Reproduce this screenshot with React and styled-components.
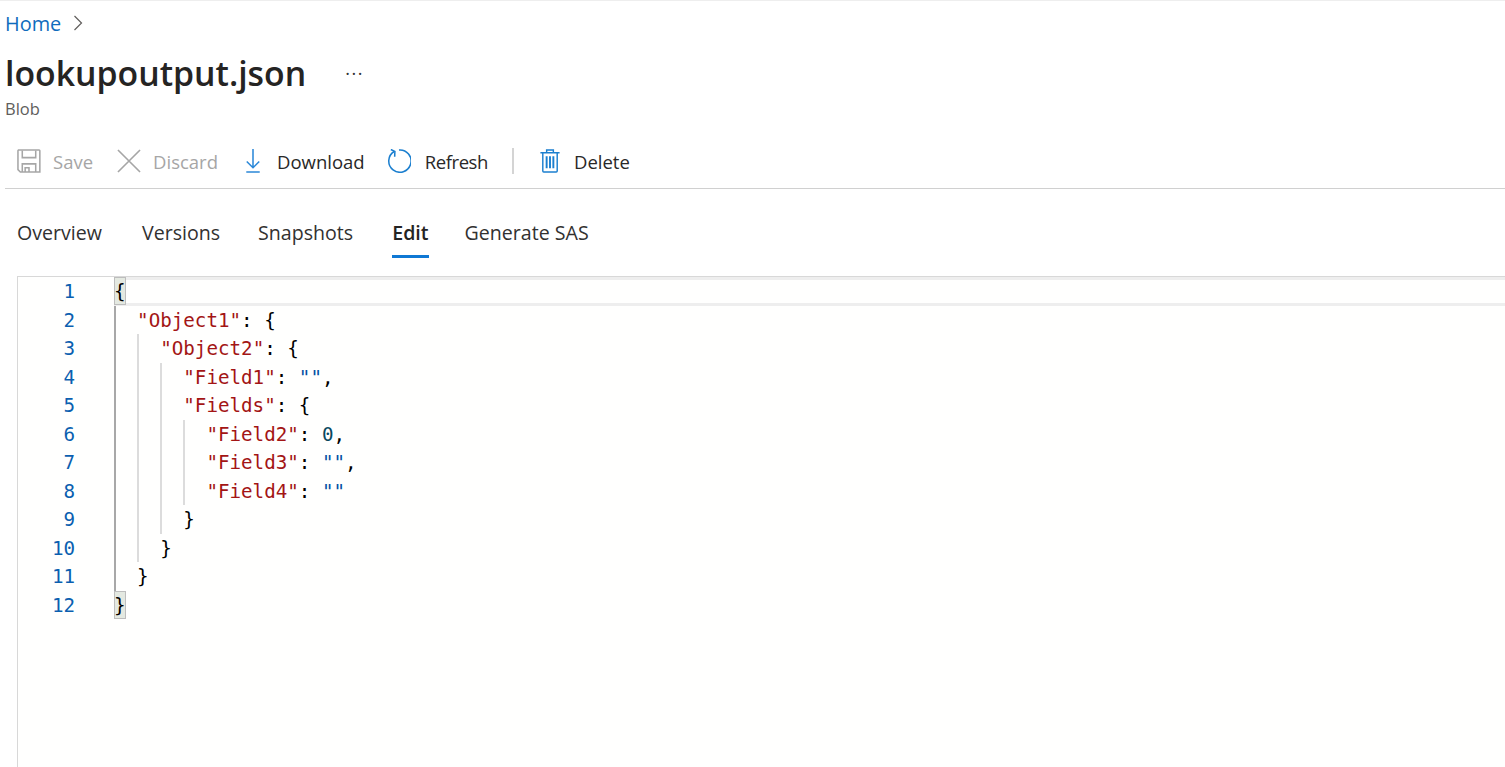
import React from "react";
import styled, { createGlobalStyle } from "styled-components";

const Global = createGlobalStyle`
  html, body { margin: 0; padding: 0; background: #fff; height: 100%; overflow: hidden; }
  #root { height: 100%; }
`;
const Page = styled.div`
  height: 767px; box-sizing: border-box; border-top: 1px solid #eee;
  padding-left: 5px; font-family: "Open Sans", "Noto Sans", sans-serif; color: #292827; overflow: hidden;
`;
const Crumbs = styled.nav`
  height: 45px; box-sizing: border-box; padding-bottom: 1px; display: flex; align-items: center; gap: 12px; font-size: 19.9px;
`;
const HomeLink = styled.a`color: #0f6cbd;`;
const TitleRow = styled.div`display: flex; align-items: center; height: 54px; gap: 39px;`;
const Title = styled.h1`margin: 0; font-size: 33.8px; font-weight: 600; line-height: 54px; color: #252423;`;
const More = styled.span`font-size: 18px; line-height: 1; letter-spacing: 1.6px; margin-top: -1px; color: #333;`;
const Kind = styled.div`font-size: 16.5px; color: #605e5c; height: 18px; line-height: 18px;`;
const Toolbar = styled.div`
  margin-top: 21px; height: 50px; box-sizing: border-box; border-bottom: 1px solid #d0d0d0;
  display: flex; align-items: flex-start; padding-left: 12px; font-size: 18.5px;
`;
const Action = styled.button`
  all: unset; display: flex; align-items: center; height: 26px; margin-top: 9px;
  gap: ${p => p.$gap}px; margin-right: ${p => p.$mr}px; color: ${p => (p.$off ? "#a6a6a6" : "#292827")};
  letter-spacing: ${p => p.$ls || 0}px;
`;
const Sep = styled.div`width: 2px; height: 26px; background: #d4d4d4; margin: 9px 26px 0 0;`;
const Tabs = styled.div`display: flex; padding-left: 12px; gap: 39px; height: 70px; font-size: 19.6px;`;
const Tab = styled.div`
  height: 66px; line-height: 87px; position: relative; margin-left: ${p => p.$ml || 0}px;
  font-weight: ${p => (p.$active ? 600 : 400)};
  color: ${p => (p.$active ? "#252423" : "#323130")};
  border-bottom: 3px solid ${p => (p.$active ? "#0f78d4" : "transparent")};
`;
const Editor = styled.div`
  margin-left: 12px; margin-top: 17px; height: 492px; display: flex; background: #fffffe;
  border-left: 1px solid #d8d8d8; border-top: 1px solid #d8d8d8;
  font-family: "DejaVu Sans Mono", monospace; font-size: 19.2px;
`;
const Gutter = styled.div`width: 96px; flex: none;`;
const LineNo = styled.div`
  height: 28.5px; line-height: 30.5px; text-align: right; padding-right: 39px; color: #0b5fb0;
`;
const Code = styled.div`flex: 1; min-width: 0;`;
const Row = styled.div`
  height: 28.5px; line-height: 30.5px; display: flex; white-space: pre; box-sizing: border-box;
  ${p => !p.$plain && "box-shadow: inset 2px 0 #a8a8a8;"}
  ${p => p.$current && "border-top: 3px solid #eeeeee; border-bottom: 3px solid #eeeeee; line-height: 22.5px;"}
`;
const Guide = styled.span`
  width: 23.1px; flex: none; box-sizing: border-box; height: 28.5px;
  border-left: ${p => (p.$on ? "2px solid #dcdcdc" : "0")};
`;
const Key = styled.span`color: #a31515;`;
const Punct = styled.span`color: #000;`;
const Num = styled.span`color: #09485f;`;
const Str = styled.span`color: #0451a5;`;
const Match = styled.span`
  display: inline-block; width: 12px; height: 28px; box-sizing: border-box; background: #e4e9e1;
  border: 1px solid #bdbdbd; line-height: 28px; margin-top: ${p => p.$mt}px; flex: none; color: #000;
  text-indent: -1px;
`;

const Save = () => (
  <svg width="24" height="24" viewBox="0 0 25 25" fill="none" stroke="#a6a6a6" strokeWidth="1.6">
    <path d="M1.5 1h21.5a.8.8 0 0 1 .8.8V24H3.5L1 21.5V1.8z" />
    <path d="M5.5 1.5v7.5h14V1.5M5.5 24v-8.5h14V24M8.5 24v-4.5h4V24" />
  </svg>
);
const Cross = () => (
  <svg width="24" height="24" viewBox="0 0 25 25" fill="none" stroke="#a6a6a6" strokeWidth="1.7">
    <path d="M1 1l23 23M24 1L1 24" />
  </svg>
);
const Down = () => (
  <svg width="16" height="24" viewBox="0 0 16 25" fill="none" stroke="#2b88d8" strokeWidth="1.6">
    <path d="M8 0v19M1.5 13L8 19.5 14.5 13M1 24h14" />
  </svg>
);
const Refresh = () => (
  <svg width="24" height="24" viewBox="0 0 25 25" fill="none" stroke="#1b7fcf" strokeWidth="1.6">
    <path d="M7.5 2.6A11.6 11.6 0 1 0 12.5 1" />
    <path d="M4 .5L8.2 2.6 8 8" />
  </svg>
);
const Trash = () => (
  <svg width="20" height="24" viewBox="0 0 20 25" fill="none" stroke="#1b7fcf" strokeWidth="1.5">
    <path d="M0 4h20M6.5 4V1h7v3M2.5 4v19a1 1 0 0 0 1 1h13a1 1 0 0 0 1-1V4" />
    <path d="M6.5 7.5v12.5M10 7.5v12.5M13.5 7.5v12.5" strokeWidth="2" />
  </svg>
);

const Q = ({ k }) => (<><Key>"{k}"</Key><Punct>: </Punct></>);
const Empty = () => <Str>""</Str>;

const lines = [
  { levels: [], current: true, body: <Match $mt={-3}>{"{"}</Match> },
  { levels: [0], body: <><Q k="Object1" /><Punct>{"{"}</Punct></> },
  { levels: [0, 1], body: <><Q k="Object2" /><Punct>{"{"}</Punct></> },
  { levels: [0, 1, 1], body: <><Q k="Field1" /><Empty /><Punct>,</Punct></> },
  { levels: [0, 1, 1], body: <><Q k="Fields" /><Punct>{"{"}</Punct></> },
  { levels: [0, 1, 1, 1], body: <><Q k="Field2" /><Num>0</Num><Punct>,</Punct></> },
  { levels: [0, 1, 1, 1], body: <><Q k="Field3" /><Empty /><Punct>,</Punct></> },
  { levels: [0, 1, 1, 1], body: <><Q k="Field4" /><Empty /></> },
  { levels: [0, 1, 1], body: <Punct>{"}"}</Punct> },
  { levels: [0, 1], body: <Punct>{"}"}</Punct> },
  { levels: [0], body: <Punct>{"}"}</Punct> },
  { levels: [], plain: true, body: <Match $mt={0}>{"}"}</Match> },
];

export default function App() {
  return (
    <Page>
      <Global />
      <Crumbs>
        <HomeLink>Home</HomeLink>
        <svg width="10" height="16" viewBox="0 0 10 16" fill="none" stroke="#605e5c" strokeWidth="1.2"><path d="M1.5 1l7 7-7 7" /></svg>
      </Crumbs>
      <TitleRow>
        <Title>lookupoutput.json</Title>
        <More>···</More>
      </TitleRow>
      <Kind>Blob</Kind>
      <Toolbar>
        <Action $off $gap={12} $mr={24}><Save />Save</Action>
        <Action $off $gap={12} $mr={27}><Cross />Discard</Action>
        <Action $gap={16} $mr={22}><Down />Download</Action>
        <Action $gap={14} $mr={24} $ls={-0.4}><Refresh />Refresh</Action>
        <Sep />
        <Action $gap={14} $mr={0}><Trash />Delete</Action>
      </Toolbar>
      <Tabs>
        <Tab>Overview</Tab>
        <Tab $ml={1}>Versions</Tab>
        <Tab $ml={-1}>Snapshots</Tab>
        <Tab $active>Edit</Tab>
        <Tab $ml={-3}>Generate SAS</Tab>
      </Tabs>
      <Editor>
        <Gutter>
          {lines.map((_, i) => <LineNo key={i}>{i + 1}</LineNo>)}
        </Gutter>
        <Code>
          {lines.map((l, i) => (
            <Row key={i} $current={l.current} $plain={l.plain || l.current}>
              {l.levels.map((on, j) => <Guide key={j} $on={!!on} />)}
              {l.body}
            </Row>
          ))}
        </Code>
      </Editor>
    </Page>
  );
}
